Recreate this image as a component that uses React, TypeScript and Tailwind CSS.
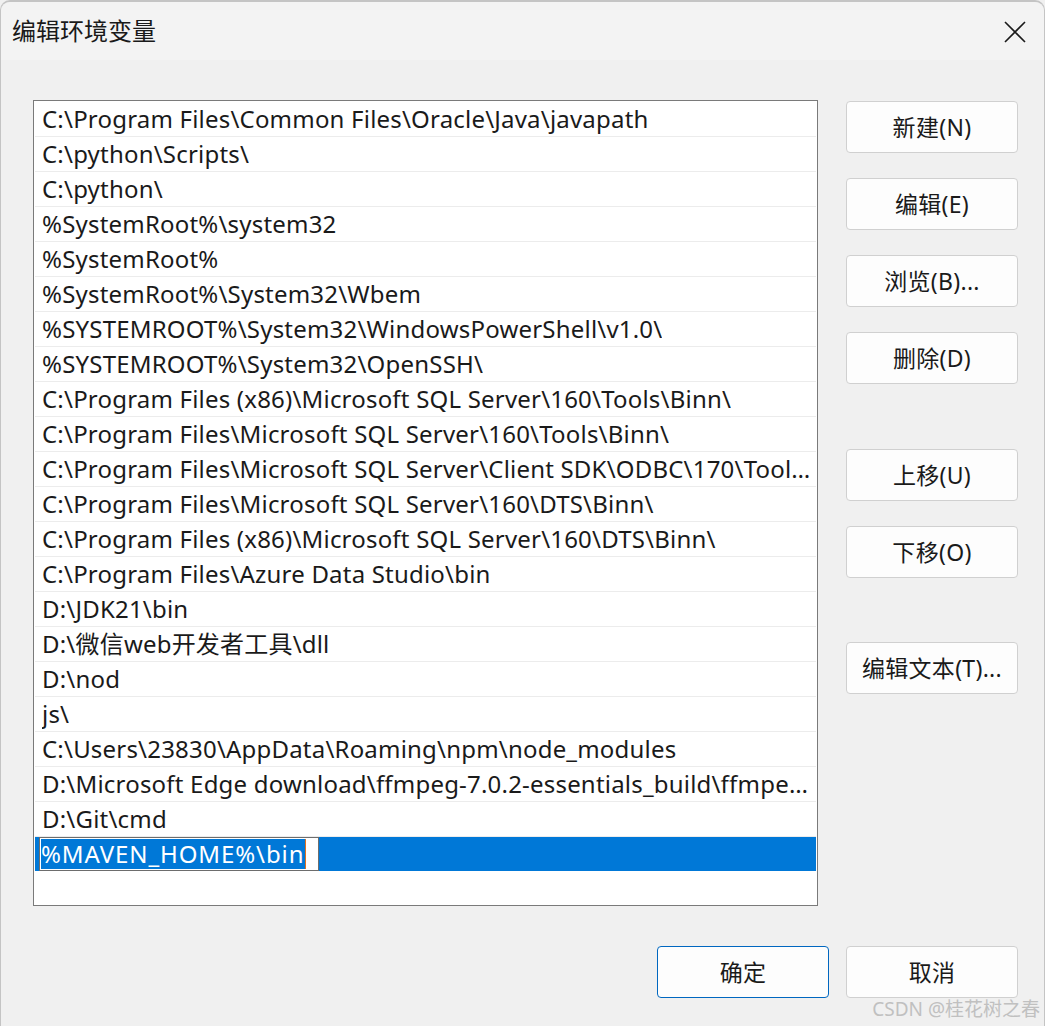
import { useState } from "react";

const paths = [
  "C:\\Program Files\\Common Files\\Oracle\\Java\\javapath",
  "C:\\python\\Scripts\\",
  "C:\\python\\",
  "%SystemRoot%\\system32",
  "%SystemRoot%",
  "%SystemRoot%\\System32\\Wbem",
  "%SYSTEMROOT%\\System32\\WindowsPowerShell\\v1.0\\",
  "%SYSTEMROOT%\\System32\\OpenSSH\\",
  "C:\\Program Files (x86)\\Microsoft SQL Server\\160\\Tools\\Binn\\",
  "C:\\Program Files\\Microsoft SQL Server\\160\\Tools\\Binn\\",
  "C:\\Program Files\\Microsoft SQL Server\\Client SDK\\ODBC\\170\\Tools\\Binn\\",
  "C:\\Program Files\\Microsoft SQL Server\\160\\DTS\\Binn\\",
  "C:\\Program Files (x86)\\Microsoft SQL Server\\160\\DTS\\Binn\\",
  "C:\\Program Files\\Azure Data Studio\\bin",
  "D:\\JDK21\\bin",
  "D:\\微信web开发者工具\\dll",
  "D:\\nod",
  "js\\",
  "C:\\Users\\23830\\AppData\\Roaming\\npm\\node_modules",
  "D:\\Microsoft Edge download\\ffmpeg-7.0.2-essentials_build\\ffmpeg-7.0.2-essentials_build\\bin",
  "D:\\Git\\cmd",
];

const font = { fontFamily: '"Noto Sans", "Noto Sans CJK SC", sans-serif' };

function Btn({ label, primary }: { label: string; primary?: boolean }) {
  return (
    <button
      className={`w-[172px] h-[52px] rounded-[4px] bg-[#fdfdfd] text-[23px] tracking-[0.3px] text-[#1a1a1a] ${
        primary ? "border border-[#0067c0]" : "border border-[#d0d0d0]"
      }`}
    >
      {label}
    </button>
  );
}

export default function App() {
  const [selected] = useState(paths.length);

  return (
    <div className="w-[1045px] h-[1026px] bg-[#f0f0f0] overflow-hidden relative" style={font}>
      <div className="h-full border-t-2 border-l border-r border-[#c4c4c4] rounded-t-[10px] flex flex-col">
        {/* title bar */}
        <div className="h-[58px] bg-[#f3f3f3] rounded-t-[10px] flex items-center justify-between pl-[11px] pr-[18px]">
          <span className="text-[24px] text-[#1a1a1a]">编辑环境变量</span>
          <svg width="22" height="22" viewBox="0 0 22 22" className="mt-[2px]">
            <path d="M1 1 L21 21 M21 1 L1 21" stroke="#1a1a1a" strokeWidth="1.6" />
          </svg>
        </div>

        <div className="flex pl-[32px] pt-[40px] gap-[28px]">
          {/* list */}
          <div className="w-[785px] h-[806px] bg-white border border-[#7a7a7a] pt-[1px] px-[1px]">
            {paths.map((p, i) => (
              <div
                key={i}
                className="h-[35px] border-b border-[#ececec] pl-[7px] pr-[4px] flex items-center text-[24px] tracking-[0.2px] text-[#1a1a1a] leading-[34px]"
              >
                <span className="truncate block">{p}</span>
              </div>
            ))}
            <div className="h-[34px] bg-[#0078d7] flex items-center pl-[4px]" data-sel={selected}>
              <div className="h-[34px] w-[280px] border border-[#6d6d6d] bg-white flex items-center pl-[1px]">
                <span className="bg-[#0078d7] text-white text-[24px] tracking-[0.9px] leading-[30px] h-[30px] flex items-center pr-[1px]">
                  %MAVEN_HOME%\bin
                </span>
                <span className="w-[1px] h-[30px] bg-[#e07020]" />
              </div>
            </div>
          </div>

          {/* buttons */}
          <div className="flex flex-col pt-[1px]">
            <div className="flex flex-col gap-[25px]">
              <Btn label="新建(N)" />
              <Btn label="编辑(E)" />
              <Btn label="浏览(B)..." />
              <Btn label="删除(D)" />
            </div>
            <div className="flex flex-col gap-[25px] mt-[65px]">
              <Btn label="上移(U)" />
              <Btn label="下移(O)" />
            </div>
            <div className="mt-[64px]">
              <Btn label="编辑文本(T)..." />
            </div>
          </div>
        </div>

        <div className="flex justify-end gap-[17px] pr-[26px] mt-[40px]">
          <Btn label="确定" primary />
          <Btn label="取消" />
        </div>
      </div>
      <div className="absolute right-[5px] bottom-[7px] text-[19px] text-[#c0c0c0] leading-none">
        CSDN @桂花树之春
      </div>
    </div>
  );
}
